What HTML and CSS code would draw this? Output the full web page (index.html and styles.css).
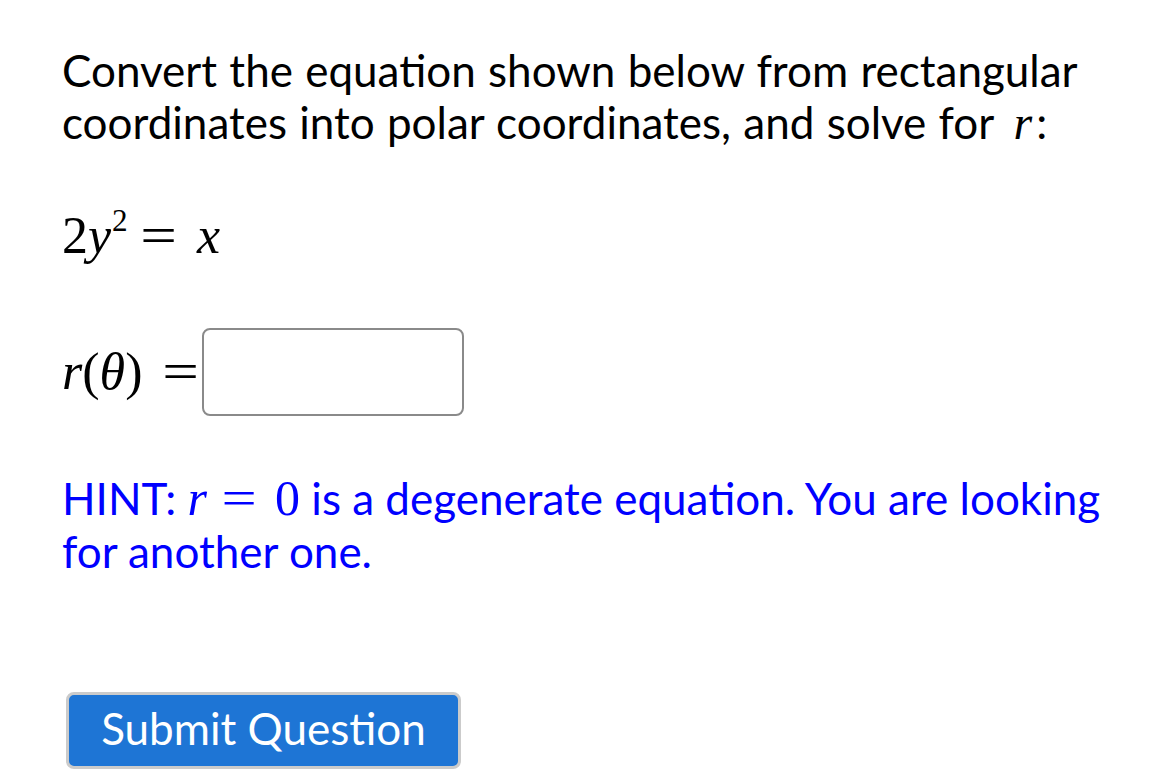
FILE: index.html
```html
<!DOCTYPE html>
<html lang="en">
<head>
<meta charset="utf-8">
<title>Polar coordinates</title>
<link rel="stylesheet" href="styles.css">
</head>
<body>
<main class="problem">
  <p class="text question">Convert the equation shown below from rectangular coordinates into polar coordinates, and solve for <span class="math inline-q"><span class="mi">r</span></span>:</p>
  <div class="math eq1"><span class="mn">2</span><span class="mi">y</span><sup class="sup">2</sup><span class="mo mo-eq1">=</span><span class="mi">x</span></div>
  <div class="answer-row">
    <span class="math lhs"><span class="mi">r</span><span class="mn">(</span><span class="mi">θ</span><span class="mn">)</span><span class="mo mo-ans">=</span></span>
    <input class="answer" type="text" aria-label="r(θ)">
  </div>
  <p class="text hint">HINT: <span class="math inline-h"><span class="mi">r</span><span class="mo mo-hint">=</span><span class="mn">0</span></span> is a degenerate equation. You are looking for another one.</p>
  <button class="submit" type="button">Submit Question</button>
</main>
</body>
</html>
```
FILE: styles.css
```css
html, body {
  margin: 0;
  padding: 0;
  background: #ffffff;
}

body {
  font-family: "Lato", "Open Sans", sans-serif;
  color: #000000;
}

.problem {
  padding: 44px 40px 0 62px;
}

.text {
  margin: 0;
  font-size: 44px;
  line-height: 52px;
}

.question {
  word-spacing: 1px;
}

.math {
  font-family: "Liberation Serif", "Times New Roman", serif;
}

.mi {
  font-style: italic;
}

.mn {
  font-style: normal;
}

.inline-q {
  font-size: 48px;
  line-height: 0;
  margin: 0 4px 0 8px;
}

.eq1 {
  margin-top: 58px;
  font-size: 52px;
  line-height: 60px;
  height: 60px;
}

.sup {
  font-size: 0.6em;
  line-height: 0;
  vertical-align: 22px;
  margin-left: 1px;
}

.mo {
  display: inline-block;
  width: 0.564em;
  text-align: center;
  font-style: normal;
  transform: scaleX(1.25);
}

.mo-eq1 {
  margin: 0 24px 0 16px;
}

.answer-row {
  display: flex;
  align-items: center;
  margin-top: 62px;
  height: 88px;
}

.lhs {
  font-size: 52px;
  line-height: 60px;
  white-space: nowrap;
}

.mo-ans {
  margin: 0 6px 0 24px;
}

.answer {
  box-sizing: border-box;
  width: 262px;
  height: 88px;
  margin: 0;
  border: 2px solid #8a8a8a;
  border-radius: 8px;
  background: #ffffff;
  font-size: 40px;
  padding: 0 10px;
}

.hint {
  margin-top: 56px;
  color: #0000ff;
  line-height: 53px;
}

.inline-h {
  font-size: 50px;
  line-height: 0;
  color: #0000ff;
}

.mo-hint {
  margin: 0 22px 0 18px;
}

.submit {
  display: block;
  box-sizing: border-box;
  width: 395px;
  margin: 114px 0 0 4px;
  padding: 7px 0 12px;
  text-align: center;
  font-family: "Lato", "Open Sans", sans-serif;
  font-size: 44px;
  line-height: 52px;
  color: #ffffff;
  background: #1e75d5;
  border: 3px solid #cbcbcb;
  border-radius: 8px;
  cursor: pointer;
}
```
